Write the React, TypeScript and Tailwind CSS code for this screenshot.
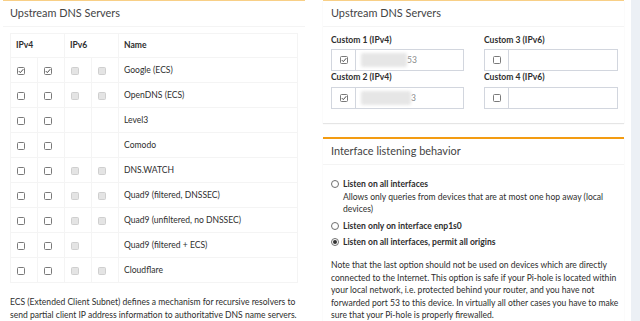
import React from 'react';

const FONT = "font-['Lato','Liberation_Sans',sans-serif]";

function Box({ checked = false, disabled = false }: { checked?: boolean; disabled?: boolean }) {
  if (disabled) {
    return <span className="inline-block w-[8px] h-[8px] rounded-[1.5px] border border-[#cfcfcf] bg-[#e4e4e4] align-middle" />;
  }
  return (
    <span className="inline-flex items-center justify-center w-[8px] h-[8px] rounded-[1.5px] border border-[#7a7a7a] bg-white align-middle">
      {checked && (
        <svg width="6" height="6" viewBox="0 0 6 6" className="block">
          <path d="M0.8 3.1 L2.3 4.6 L5.3 1.2" fill="none" stroke="#333" strokeWidth="0.9" />
        </svg>
      )}
    </span>
  );
}

function Radio({ checked = false }: { checked?: boolean }) {
  return (
    <span className="inline-flex items-center justify-center w-[8px] h-[8px] rounded-full border border-[#6f6f6f] bg-white shrink-0">
      {checked && <span className="block w-[4px] h-[4px] rounded-full bg-[#333]" />}
    </span>
  );
}

type Row = { name: string; v4: [boolean, boolean]; v6: number };
const rows: Row[] = [
  { name: 'Google (ECS)', v4: [true, true], v6: 2 },
  { name: 'OpenDNS (ECS)', v4: [false, false], v6: 2 },
  { name: 'Level3', v4: [false, false], v6: 0 },
  { name: 'Comodo', v4: [false, false], v6: 0 },
  { name: 'DNS.WATCH', v4: [false, false], v6: 2 },
  { name: 'Quad9 (filtered, DNSSEC)', v4: [false, false], v6: 2 },
  { name: 'Quad9 (unfiltered, no DNSSEC)', v4: [false, false], v6: 2 },
  { name: 'Quad9 (filtered + ECS)', v4: [false, false], v6: 1 },
  { name: 'Cloudflare', v4: [false, false], v6: 2 },
];

function CardHeader({ title, pl }: { title: string; pl: string }) {
  return (
    <div className={`h-[26px] border-b border-[#f4f4f4] flex items-center ${pl}`}>
      <span className="text-[10.9px] leading-none text-[#444]">{title}</span>
    </div>
  );
}

function InputGroup({ checked, value }: { checked: boolean; value?: React.ReactNode }) {
  return (
    <div className="h-[22px] flex border border-[#d2d6de] bg-white">
      <div className="w-[24px] border-r border-[#d2d6de] flex items-center justify-center">
        <Box checked={checked} />
      </div>
      <div className="flex-1 flex items-center pl-[5px] text-[#8a8a8a] overflow-hidden">{value}</div>
    </div>
  );
}

function Blur({ w }: { w: string }) {
  return <span className={`inline-block ${w} h-[14px] bg-[#e6e6e6] rounded-[2px] blur-[1.5px]`} />;
}

export default function App() {
  const td = 'border border-[#f4f4f4] p-0 pl-[6px] align-middle';
  return (
    <div className={`${FONT} w-[640px] h-[321px] overflow-hidden bg-white flex text-[#2e2e2e] text-[8.55px] leading-[12.5px]`}>
      {/* Left card */}
      <div className="ml-[3px] w-[302px] shrink-0 flex flex-col">
        <div className="h-[1px] bg-[#f8cf86]" />
        <CardHeader title="Upstream DNS Servers" pl="pl-[7px]" />
        <div className="px-[7px] pt-[6px]">
          <table className="w-[288px] border-collapse border border-[#f4f4f4] table-fixed">
            <colgroup>
              <col className="w-[27px]" />
              <col className="w-[27px]" />
              <col className="w-[27px]" />
              <col className="w-[27px]" />
              <col />
            </colgroup>
            <thead>
              <tr className="h-[24px]">
                <th colSpan={2} className="border border-[#f4f4f4] text-left font-bold pl-[5px]">IPv4</th>
                <th colSpan={2} className="border border-[#f4f4f4] text-left font-bold pl-[5px]">IPv6</th>
                <th className="border border-[#f4f4f4] text-left font-bold pl-[5px]">Name</th>
              </tr>
            </thead>
            <tbody>
              {rows.map((r) => (
                <tr key={r.name} className="h-[25px]">
                  <td className={td}><Box checked={r.v4[0]} /></td>
                  <td className={td}><Box checked={r.v4[1]} /></td>
                  <td className={td}>{r.v6 >= 1 && <Box disabled />}</td>
                  <td className={td}>{r.v6 >= 2 && <Box disabled />}</td>
                  <td className="border border-[#f4f4f4] pl-[5px] align-middle">{r.name}</td>
                </tr>
              ))}
            </tbody>
          </table>
          <div className="mt-[13px] whitespace-nowrap">
            <div>ECS (Extended Client Subnet) defines a mechanism for recursive resolvers to</div>
            <div>send partial client IP address information to authoritative DNS name servers.</div>
          </div>
        </div>
      </div>

      {/* Right column */}
      <div className="ml-[18px] w-[301px] shrink-0 flex flex-col">
        <div className="bg-white shadow-[0_1px_1px_rgba(0,0,0,0.1)]">
          <div className="h-[1px] bg-[#f8cf86]" />
          <CardHeader title="Upstream DNS Servers" pl="pl-[8px]" />
          <div className="pl-[8px] pr-[6px] pt-[7px] pb-[14px] grid grid-cols-[133px_134px] gap-x-[20px]">
            <div>
              <div className="h-[15px] font-bold">Custom 1 (IPv4)</div>
              <InputGroup checked value={<><Blur w="w-[46px]" /><span>53</span></>} />
              <div className="h-[16px] font-bold">Custom 2 (IPv4)</div>
              <InputGroup checked value={<><Blur w="w-[50px]" /><span>3</span></>} />
            </div>
            <div>
              <div className="h-[15px] font-bold">Custom 3 (IPv6)</div>
              <InputGroup checked={false} />
              <div className="h-[16px] font-bold">Custom 4 (IPv6)</div>
              <InputGroup checked={false} />
            </div>
          </div>
        </div>

        <div className="mt-[14px] bg-white border-t-2 border-[#f39c12] shadow-[0_1px_1px_rgba(0,0,0,0.1)]">
          <CardHeader title="Interface listening behavior" pl="pl-[8px]" />
          <div className="pl-[8px] pr-[6px] pt-[13px] whitespace-nowrap">
            <div className="flex items-center gap-[4px] font-bold">
              <Radio />
              <span>Listen on all interfaces</span>
            </div>
            <div className="pl-[12px]">
              <div>Allows only queries from devices that are at most one hop away (local</div>
              <div>devices)</div>
            </div>
            <div className="mt-[4px] flex items-center gap-[4px] font-bold">
              <Radio />
              <span>Listen only on interface enp1s0</span>
            </div>
            <div className="mt-[3.5px] flex items-center gap-[4px] font-bold">
              <Radio checked />
              <span>Listen on all interfaces, permit all origins</span>
            </div>
            <div className="mt-[11px]">
              <div>Note that the last option should not be used on devices which are directly</div>
              <div>connected to the Internet. This option is safe if your Pi-hole is located within</div>
              <div>your local network, i.e. protected behind your router, and you have not</div>
              <div>forwarded port 53 to this device. In virtually all other cases you have to make</div>
              <div>sure that your Pi-hole is properly firewalled.</div>
            </div>
          </div>
        </div>
      </div>

      <div className="ml-[7px] w-[9px] shrink-0 bg-[#ecf0f5]" />
    </div>
  );
}
